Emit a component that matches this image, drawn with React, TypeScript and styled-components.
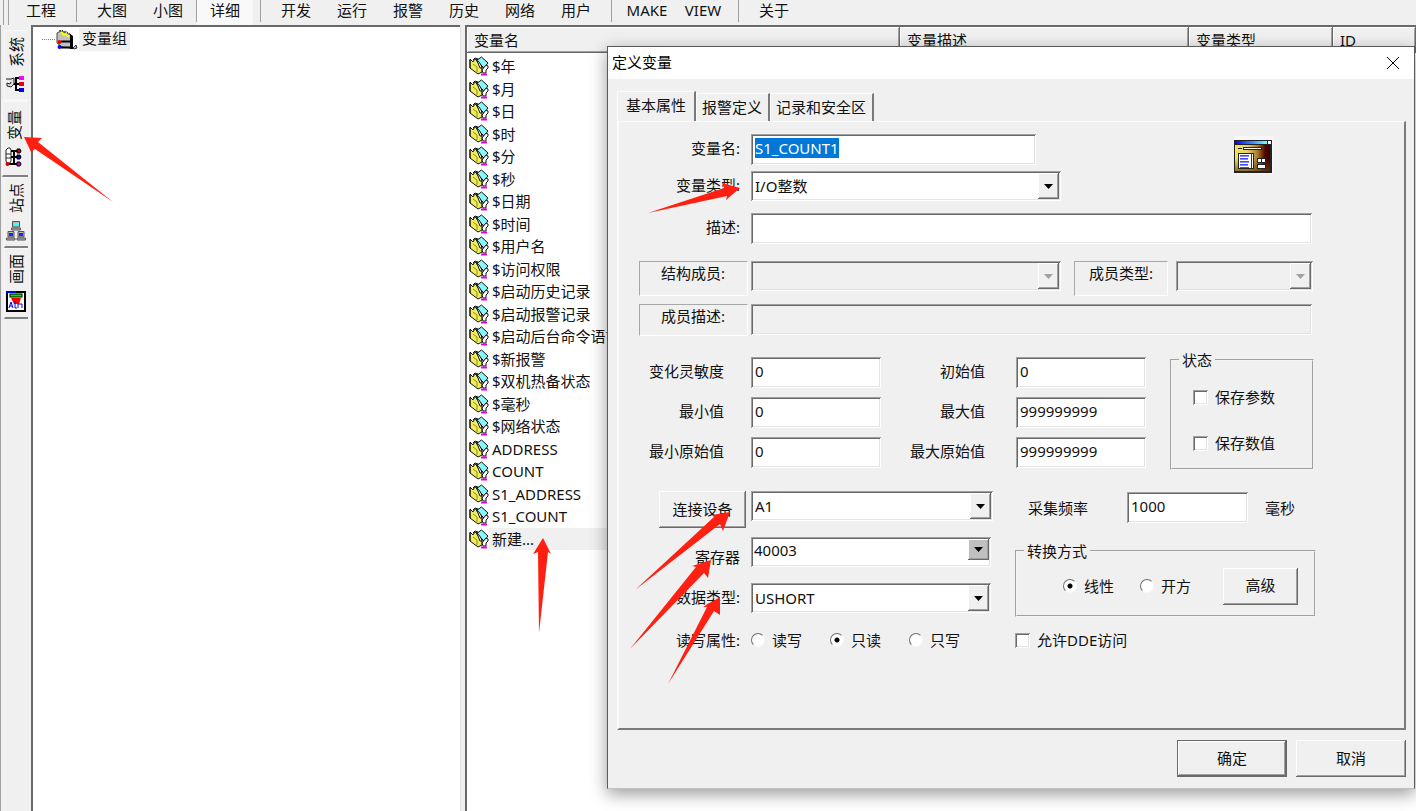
import React, { useEffect, useRef } from "react";
import styled, { createGlobalStyle, css } from "styled-components";

const SUNKEN = css`
  box-shadow: inset 1px 1px #a0a0a0, inset -1px -1px #ffffff, inset 2px 2px #696969,
    inset -2px -2px #e3e3e3;
`;
const RAISED = css`
  box-shadow: inset -1px -1px #696969, inset 1px 1px #ffffff, inset -2px -2px #a0a0a0;
`;

const GlobalStyle = createGlobalStyle`
  *, *::before, *::after { box-sizing: border-box; }
  body {
    margin: 0;
    background: #f0f0f0;
    color: #111;
    font: 15px/20px "Noto Sans", "Noto Sans CJK SC", sans-serif;
  }
  button, input, select { font: inherit; color: inherit; margin: 0; border-radius: 0; }
`;

const Screen = styled.div`
  position: relative;
  display: flex;
  flex-direction: column;
  min-height: 100vh;
  overflow: hidden;
`;

/* ---------- toolbar ---------- */
const Toolbar = styled.nav`
  display: flex;
  align-items: stretch;
  height: 25px;
  padding-left: 3px;
`;
const Grip = styled.span`
  width: 6px;
  margin-right: 4px;
  border-left: 1px solid #a0a0a0;
  border-right: 1px solid #a0a0a0;
`;
const ToolButton = styled.button<{ $pressed?: boolean }>`
  width: 56px;
  padding: 0 0 6px;
  border: 0;
  background: ${(p) => (p.$pressed ? "#f9f9f9" : "transparent")};
  white-space: nowrap;
`;
const Divider = styled.span<{ $tight?: boolean }>`
  width: 1px;
  margin: 0 ${(p) => (p.$tight ? 0 : 7)}px 3px;
  background: #a0a0a0;
`;

/* ---------- work area ---------- */
const Work = styled.div`
  display: flex;
  flex: 1;
`;
const SideTabs = styled.div`
  display: flex;
  flex-direction: column;
  width: 31px;
  padding: 5px 3px 0 1px;
  border-left: 1px solid #a0a0a0;
`;
const SideTab = styled.button<{ $active?: boolean }>`
  display: flex;
  flex-direction: column;
  align-items: center;
  justify-content: center;
  gap: 7px;
  width: ${(p) => (p.$active ? 26 : 24)}px;
  height: ${(p) => (p.$active ? 76 : 71)}px;
  align-self: flex-end;
  padding: 0 ${(p) => (p.$active ? 4 : 2)}px 0 0;
  border: solid #f8f8f8;
  border-width: 1px 0 2px 1px;
  border-bottom-color: #808080;
  background: #f0f0f0;
  &:first-child {
    border-bottom-color: #f8f8f8;
  }
`;
const SideLabel = styled.span`
  writing-mode: vertical-rl;
  text-orientation: sideways;
  transform: rotate(180deg);
  line-height: 18px;
`;
const Pane = styled.section<{ $grow?: boolean }>`
  flex: ${(p) => (p.$grow ? "1 1 0" : "0 0 429px")};
  min-width: 0;
  border: solid #696969;
  border-width: 2px 0 0 2px;
  background: #ffffff;
  overflow: hidden;
`;
const Splitter = styled.div`
  width: 5px;
  border-left: 1px solid #e3e3e3;
`;
const TreeItem = styled.div`
  display: flex;
  align-items: center;
  gap: 1px;
  padding: 1px 0 0 9px;
`;
const TreeLine = styled.span`
  width: 13px;
  border-top: 1px dotted #808080;
`;
const TreeLabel = styled.span`
  padding: 0 3px 3px;
  background: #f0f0f0;
`;

/* ---------- variable list ---------- */
const ListTable = styled.table`
  width: 100%;
  border-collapse: separate;
  border-spacing: 0;
  table-layout: fixed;
`;
const HeadCell = styled.th<{ $width?: number }>`
  width: ${(p) => (p.$width ? `${p.$width}px` : "auto")};
  height: 26px;
  padding: 0 7px 1px;
  font-weight: 400;
  text-align: left;
  background: #f0f0f0;
  ${RAISED}
`;
const Row = styled.tr`
  height: 22px;
  &:nth-child(even) {
    height: 23px;
  }
`;
const HeadGap = styled.tr`
  height: 2px;
`;
const Cell = styled.td`
  padding: 0;
  white-space: nowrap;
`;
const NameBox = styled.div<{ $selected?: boolean }>`
  display: flex;
  align-items: center;
  height: 22px;
  padding-left: 2px;
  span {
    flex: 1;
    padding: 1px 3px;
    background: ${(p) => (p.$selected ? "#f0f0f0" : "transparent")};
  }
`;

/* ---------- dialog ---------- */
const Dialog = styled.div`
  position: absolute;
  top: 46px;
  left: 607px;
  right: 1px;
  min-width: 808px;
  border: 1px solid #5a5a5a;
  border-bottom-color: #c0c0c0;
  background: #f0f0f0;
  box-shadow: 0 5px 16px rgba(0, 0, 0, 0.4);
`;
const TitleBar = styled.header`
  display: flex;
  align-items: center;
  justify-content: space-between;
  height: 32px;
  padding: 0 14px 0 4px;
  background: #ffffff;
  color: #000;
`;
const Title = styled.h1`
  margin: 0;
  padding-bottom: 2px;
  font-size: 15px;
  font-weight: 400;
`;
const CloseButton = styled.button`
  display: flex;
  padding: 0;
  border: 0;
  background: none;
`;
const DialogBody = styled.div`
  padding: 12px 8px 11px 9px;
`;
const TabStrip = styled.div`
  display: flex;
  align-items: flex-end;
  height: 30px;
`;
const Tab = styled.button<{ $active?: boolean }>`
  height: ${(p) => (p.$active ? 30 : 28)}px;
  padding: ${(p) => (p.$active ? "0 8px 3px" : "0 6px 1px 5px")};
  border: solid #fbfbfb;
  border-width: 1px 2px 0 1px;
  border-right-color: #7a7a7a;
  background: #f0f0f0;
  white-space: nowrap;
`;
const Panel = styled.form`
  display: flex;
  flex-direction: column;
  padding: 12px 20px 78px;
  border: solid #fbfbfb;
  border-width: 1px 2px 2px;
  border-right-color: #7a7a7a;
  border-bottom-color: #7a7a7a;
`;
const FieldRow = styled.div<{ $top?: number; $height?: number; $align?: string }>`
  display: flex;
  align-items: ${(p) => p.$align ?? "flex-start"};
  gap: 3px;
  width: max-content;
  height: ${(p) => p.$height ?? 29}px;
  margin-top: ${(p) => p.$top ?? 0}px;
`;
const Label = styled.label<{ $pad?: number; $end?: boolean }>`
  width: 109px;
  padding: ${(p) => (p.$end ? 0 : 4)}px ${(p) => p.$pad ?? 8}px 0 0;
  text-align: right;
  white-space: nowrap;
`;
const BoxLabel = styled.label<{ $width: number; $pad: number }>`
  align-self: stretch;
  width: ${(p) => p.$width}px;
  padding: 1px ${(p) => p.$pad}px 0 0;
  border: 1px solid #a8a8a8;
  border-right-color: #fff;
  border-bottom-color: #fff;
  text-align: right;
`;
const TextBox = styled.input<{ $width: number }>`
  width: ${(p) => p.$width}px;
  height: 31px;
  padding: 2px 4px 6px;
  border: 0;
  outline: 0;
  background: #ffffff;
  line-height: 21px;
  ${SUNKEN}
  &:disabled {
    background: #f0f0f0;
  }
  &::selection {
    background: #0078d7;
    color: #ffffff;
  }
`;
const ComboFrame = styled.div<{ $width: number }>`
  display: grid;
  width: ${(p) => p.$width}px;
  height: 30px;
  padding: 2px;
  background: #ffffff;
  ${SUNKEN}
  &:has(:disabled) {
    background: #f0f0f0;
  }
`;
const ComboSelect = styled.select`
  grid-area: 1 / 1;
  width: 100%;
  padding: 0 24px 0 2px;
  border: 0;
  outline: 0;
  appearance: none;
  background: transparent;
  opacity: 1;
`;
const ComboInput = styled.input`
  grid-area: 1 / 1;
  width: 100%;
  padding: 0 24px 4px 1px;
  border: 0;
  outline: 0;
  background: transparent;
`;
const ComboArrow = styled.span<{ $dark?: boolean }>`
  grid-area: 1 / 1;
  justify-self: end;
  display: flex;
  align-items: center;
  justify-content: center;
  width: 21px;
  height: ${(p) => (p.$dark ? "21px" : "100%")};
  background: ${(p) => (p.$dark ? "#c0c0c0" : "#f0f0f0")};
  pointer-events: none;
  ${RAISED}
`;
const PushButton = styled.button<{ $width: number; $default?: boolean }>`
  width: ${(p) => p.$width}px;
  height: 37px;
  padding: 0 0 2px;
  border: ${(p) => (p.$default ? "1px solid #696969" : "0")};
  background: #f0f0f0;
  ${RAISED}
`;
const AppIconSlot = styled.div`
  padding: 2px 0 0 195px;
`;
const MemberType = styled.div`
  display: flex;
  gap: 8px;
  height: 35px;
  padding-left: 10px;
`;
const Ranges = styled.div`
  display: flex;
  width: max-content;
  margin-top: 14px;
`;
const RangeGrid = styled.div`
  display: grid;
  grid-template-columns: 109px 133px 132px 133px;
  grid-auto-rows: 31px;
  row-gap: 9px;
  padding-top: 7px;
  ${Label} {
    width: auto;
  }
  ${TextBox} {
    margin-left: 3px;
  }
`;
const Group = styled.fieldset<{ $width: number; $height: number; $top?: number; $left?: number }>`
  width: ${(p) => p.$width}px;
  height: ${(p) => p.$height}px;
  min-width: 0;
  margin: ${(p) => p.$top ?? 0}px 0 0 ${(p) => p.$left ?? 0}px;
  padding: 0;
  border: 2px groove #f4f4f4;
`;
const Legend = styled.legend`
  margin-left: 7px;
  padding: 0 3px;
`;
const StateList = styled.div`
  display: flex;
  flex-direction: column;
  gap: 26px;
  padding: 17px 0 0 21px;
`;
const Choice = styled.label`
  display: flex;
  align-items: center;
  gap: 7px;
  white-space: nowrap;
`;
const Check = styled.input`
  appearance: none;
  width: 15px;
  height: 15px;
  background: #ffffff;
  ${SUNKEN}
`;
const Radio = styled.input`
  appearance: none;
  width: 14px;
  height: 14px;
  border: 1px solid;
  border-color: #707070 #f8f8f8 #f8f8f8 #707070;
  border-radius: 7px;
  background: #ffffff;
  &:checked {
    background: radial-gradient(circle, #000 0 2px, #fff 3px);
  }
`;
const Source = styled.div`
  display: flex;
  gap: 22px;
  width: max-content;
  margin-top: 21px;
`;
const SourceColumn = styled.div`
  display: flex;
  flex-direction: column;
`;
const DeviceButtonSlot = styled.div`
  width: 109px;
  padding-left: 20px;
`;
const RadioGroup = styled.div<{ $gap: number }>`
  display: flex;
  gap: ${(p) => p.$gap}px;
`;
const RateRow = styled.div`
  display: flex;
  align-items: center;
  height: 31px;
  margin-top: 1px;
  padding-left: 13px;
`;
const RateLabel = styled.label`
  width: 99px;
`;
const Unit = styled.span`
  padding-left: 17px;
`;
const ConvertRow = styled.div`
  display: flex;
  align-items: center;
  gap: 32px;
  height: 50px;
  padding: 0 0 0 46px;
`;
const Footer = styled.footer`
  display: flex;
  justify-content: flex-end;
  gap: 9px;
  padding-top: 10px;
`;
const Pointers = styled.svg`
  position: absolute;
  top: 0;
  left: 0;
  width: 100%;
  height: 100%;
  pointer-events: none;
`;

/* ---------- drawings ---------- */
const VarIcon = () => (
  <svg width="20" height="20" viewBox="0 0 20 20" aria-hidden="true">
    <path d="M1 3L4 6L5 4L7 3L9 6L13 11V16L9 18L1 12Z" fill="#f0ee58" stroke="#111" />
    <path d="M4 8L8 11L8 16" fill="none" stroke="#8a8a28" />
    <path d="M12.500 1L19 7L15 12L7.500 4.500Z" fill="#86f8fc" stroke="#111" />
    <path d="M7.500 4.500L10 6L12 9L13 12L11 12L9 7Z" fill="#fff" stroke="#111" />
    <path d="M15 11.500L17 9L19 10L19 12L17 14V17H14L13 14Z" fill="#fff" stroke="#111" />
    <path d="M1 4V12M4 4L6 2L9 3L8 5" fill="none" stroke="#111" />
    <path d="M12 17.500H18V19.500H12Z" fill="#e000e0" />
  </svg>
);
const GroupIcon = () => (
  <svg width="22" height="22" viewBox="0 0 22 22" aria-hidden="true">
    <path d="M1 4L5 2L15 6V19L6 18L1 14Z" fill="#c0c0c0" stroke="#444" />
    <path d="M3 2L6 1L8 3L10 2L12 4L14 5L16 7" fill="none" stroke="#333" strokeDasharray="2 1" />
    <path d="M5 3L8 6L10 5L13 8" fill="none" stroke="#ff0" strokeWidth="2" />
    <path d="M14 5L17 7V20H14Z" fill="#000" />
    <path d="M5 12.500H14M5 18.500H14" stroke="#000" strokeWidth="2" />
    <path d="M17 19L20 16L21 19L18 20Z" fill="#bbb" stroke="#333" />
    <circle cx="3.500" cy="13" r="2" fill="#e00" />
    <circle cx="3.500" cy="18" r="2" fill="#00e" />
  </svg>
);
const SystemIcon = () => (
  <svg width="20" height="18" viewBox="0 0 20 18" aria-hidden="true">
    <path d="M0 4H5L8 3V9L5 12L1 11V8L4 9L5 7" fill="#ddd" stroke="#222" />
    <path d="M8 9H14M14 3H10V15H14" fill="none" stroke="#000" strokeWidth="2" />
    <rect x="13" y="1" width="5" height="4" fill="#f0f" />
    <rect x="13" y="7" width="5" height="4" fill="#e00" />
    <rect x="13" y="13" width="5" height="4" fill="#00e" />
  </svg>
);
const VariableIcon = () => (
  <svg width="18" height="20" viewBox="0 0 18 20" aria-hidden="true">
    <path d="M1 3L3 1H5L6 3V14L5 16H2L1 14ZM1 7H6M1 11H6" fill="#fff" stroke="#222" />
    <path d="M6 4H14M6 10H14M3 17H14M9 4V17" fill="none" stroke="#000" strokeWidth="2" />
    <path d="M12 2H15L16 4L15 6H12Z" fill="#b00" stroke="#000" />
    <path d="M12 8H15L16 10L15 12H12Z" fill="#00c" stroke="#000" />
    <path d="M12 15H15L16 17L15 19H12Z" fill="#c0c" stroke="#000" />
    <circle cx="2.500" cy="17" r="2" fill="#d00" />
  </svg>
);
const StationIcon = () => (
  <svg width="20" height="21" viewBox="0 0 20 21" aria-hidden="true">
    <path d="M6.500 1.500H13.500V7H6.500ZM5.500 8H14.500V10H5.500ZM2 11.500H8V17H2ZM12 11.500H18V17H12ZM0.500 18H9V20H0.500ZM11 18H19.500V20H11Z" fill="#b8b8b8" stroke="#555" />
    <rect x="8" y="3" width="5" height="3" fill="#3ff" />
    <rect x="3" y="13" width="4" height="3" fill="#22e" />
    <rect x="13" y="13" width="4" height="3" fill="#22e" />
  </svg>
);
const PictureIcon = () => (
  <svg width="20" height="21" viewBox="0 0 20 21" aria-hidden="true">
    <rect x="1" y="1" width="18" height="19" fill="#fff" stroke="#000" strokeWidth="2" />
    <path d="M0 1H10" stroke="#00e" strokeWidth="2" />
    <rect x="4" y="3" width="12" height="3" fill="#0e0" stroke="#000" />
    <path d="M5 7H15L13 13H8Z" fill="#f00" />
    <path d="M3 17L5 11L7 17M4 15H6M9 10V17H11M12 17V13H16V17" fill="none" stroke="#00e" />
  </svg>
);
const WindowIcon = () => (
  <svg width="40" height="40" viewBox="0 0 40 40" shapeRendering="crispEdges" aria-hidden="true">
    <defs>
      <linearGradient id="gold" x1="0" y1="0" x2="1" y2="0">
        <stop offset="0" stopColor="#f2e455" />
        <stop offset="0.35" stopColor="#e8d070" />
        <stop offset="0.65" stopColor="#a87828" />
        <stop offset="0.85" stopColor="#500800" />
        <stop offset="1" stopColor="#400000" />
      </linearGradient>
      <linearGradient id="shade" x1="0" y1="0" x2="0" y2="1">
        <stop offset="0.5" stopColor="#604010" stopOpacity="0" />
        <stop offset="1" stopColor="#604010" stopOpacity="0.7" />
      </linearGradient>
      <linearGradient id="bar" x1="0" y1="0" x2="1" y2="0">
        <stop offset="0" stopColor="#0000ff" />
        <stop offset="1" stopColor="#70ffff" />
      </linearGradient>
    </defs>
    <rect width="40" height="38" fill="#f6f6f6" />
    <rect y="4" width="38" height="33" fill="#222" />
    <rect x="1" y="5" width="32" height="3" fill="url(#bar)" />
    <rect x="34" y="5" width="3" height="3" fill="#fff" />
    <rect x="1" y="9" width="35" height="26" fill="url(#gold)" />
    <rect x="1" y="9" width="35" height="26" fill="url(#shade)" />
    <path d="M4 12.500H8" stroke="#222" />
    <rect x="9.500" y="11.500" width="18" height="2" fill="#fff" stroke="#222" />
    <rect x="4.500" y="17.500" width="15" height="15" fill="#fff" stroke="#222" />
    <path d="M6 19.500H15M6 22.500H14M6 25.500H15M6 28.500H14M6 31H15" stroke="#4848ff" />
    <path d="M6 20.500H15M6 23.500H14M6 26.500H15M6 29.500H14" stroke="#8a8aff" />
    <path d="M17.500 17V33" stroke="#333" />
    <rect x="23.500" y="22.500" width="8" height="4" fill="#fff" stroke="#222" />
    <path d="M27.500 22V27" stroke="#222" />
    <rect x="23.500" y="28.500" width="8" height="4" fill="#fff" stroke="#222" />
  </svg>
);
const Triangle = ({ muted }: { muted?: boolean }) => (
  <svg width="9" height="5" viewBox="0 0 9 5" aria-hidden="true">
    <path d="M0 0H9L4.500 5Z" fill={muted ? "#a0a0a0" : "#000"} />
  </svg>
);

/* ---------- pieces ---------- */
const Combo = ({ id, width, value, disabled }: { id: string; width: number; value?: string; disabled?: boolean }) => (
  <ComboFrame $width={width}>
    <ComboSelect id={id} disabled={disabled}>
      {value && <option>{value}</option>}
    </ComboSelect>
    <ComboArrow>
      <Triangle muted={disabled} />
    </ComboArrow>
  </ComboFrame>
);

const VARIABLES = [
  "$年", "$月", "$日", "$时", "$分", "$秒", "$日期", "$时间", "$用户名", "$访问权限",
  "$启动历史记录", "$启动报警记录", "$启动后台命令语言", "$新报警", "$双机热备状态",
  "$毫秒", "$网络状态", "ADDRESS", "COUNT", "S1_ADDRESS", "S1_COUNT", "新建...",
];

const RANGES = [
  ["sens", "变化灵敏度", "0", "init", "初始值", "0"],
  ["min", "最小值", "0", "max", "最大值", "999999999"],
  ["rawMin", "最小原始值", "0", "rawMax", "最大原始值", "999999999"],
];

const POINTERS = [
  "24,137 42,138 38,142 113,202 35,149 31,152",
  "740,188 722,183 724,188 648,213 727,196 726,200",
  "730,512 712,515 714,517 635,590 720,524 723,531",
  "711,560 692,566 696,567 630,649 704,573 708,578",
  "720,597 703,607 707,607 668,684 714,611 720,615",
  "543,538 533,554 538,552 539,633 548,552 551,554",
];

export default function App() {
  const nameRef = useRef<HTMLInputElement>(null);
  useEffect(() => {
    nameRef.current?.focus();
    nameRef.current?.select();
  }, []);

  return (
    <Screen>
      <GlobalStyle />
      <Toolbar>
        <Grip />
        <ToolButton>工程</ToolButton>
        <Divider />
        <ToolButton>大图</ToolButton>
        <ToolButton>小图</ToolButton>
        <Divider $tight />
        <ToolButton $pressed>详细</ToolButton>
        <Divider />
        {["开发", "运行", "报警", "历史", "网络", "用户"].map((t) => (
          <ToolButton key={t}>{t}</ToolButton>
        ))}
        <Divider />
        <ToolButton>MAKE</ToolButton>
        <ToolButton>VIEW</ToolButton>
        <Divider />
        <ToolButton>关于</ToolButton>
      </Toolbar>

      <Work>
        <SideTabs>
          <SideTab><SideLabel>系统</SideLabel><SystemIcon /></SideTab>
          <SideTab $active><SideLabel>变量</SideLabel><VariableIcon /></SideTab>
          <SideTab><SideLabel>站点</SideLabel><StationIcon /></SideTab>
          <SideTab><SideLabel>画面</SideLabel><PictureIcon /></SideTab>
        </SideTabs>
        <Pane>
          <TreeItem>
            <TreeLine />
            <GroupIcon />
            <TreeLabel>变量组</TreeLabel>
          </TreeItem>
        </Pane>
        <Splitter />
        <Pane $grow>
          <ListTable>
            <thead>
              <tr>
                <HeadCell $width={433}>变量名</HeadCell>
                <HeadCell $width={289}>变量描述</HeadCell>
                <HeadCell $width={144}>变量类型</HeadCell>
                <HeadCell>ID</HeadCell>
              </tr>
              <HeadGap />
            </thead>
            <tbody>
              {VARIABLES.map((name) => (
                <Row key={name}>
                  <Cell>
                    <NameBox $selected={name === "新建..."}>
                      <VarIcon />
                      <span>{name}</span>
                    </NameBox>
                  </Cell>
                  <Cell />
                  <Cell />
                  <Cell />
                </Row>
              ))}
            </tbody>
          </ListTable>
        </Pane>
      </Work>

      <Dialog role="dialog" aria-labelledby="dialog-title">
        <TitleBar>
          <Title id="dialog-title">定义变量</Title>
          <CloseButton aria-label="关闭">
            <svg width="14" height="14" viewBox="0 0 14 14" aria-hidden="true">
              <path d="M1 1L13 13M13 1L1 13" stroke="#000" />
            </svg>
          </CloseButton>
        </TitleBar>
        <DialogBody>
          <TabStrip>
            <Tab $active>基本属性</Tab>
            <Tab>报警定义</Tab>
            <Tab>记录和安全区</Tab>
          </TabStrip>
          <Panel onSubmit={(e) => e.preventDefault()}>
            <FieldRow $height={31}>
              <Label htmlFor="name">变量名:</Label>
              <TextBox id="name" ref={nameRef} $width={285} defaultValue="S1_COUNT1" />
              <AppIconSlot><WindowIcon /></AppIconSlot>
            </FieldRow>
            <FieldRow $top={6}>
              <Label htmlFor="type">变量类型:</Label>
              <Combo id="type" width={310} value="I/O整数" />
            </FieldRow>
            <FieldRow $top={13} $height={31}>
              <Label htmlFor="desc">描述:</Label>
              <TextBox id="desc" $width={561} />
            </FieldRow>
            <FieldRow $top={17} $height={35}>
              <BoxLabel htmlFor="member" $width={109} $pad={22}>结构成员:</BoxLabel>
              <Combo id="member" width={310} disabled />
              <MemberType>
                <BoxLabel htmlFor="memberType" $width={94} $pad={14}>成员类型:</BoxLabel>
                <Combo id="memberType" width={137} disabled />
              </MemberType>
            </FieldRow>
            <FieldRow $top={8} $height={32}>
              <BoxLabel htmlFor="memberDesc" $width={109} $pad={22}>成员描述:</BoxLabel>
              <TextBox id="memberDesc" $width={561} disabled />
            </FieldRow>

            <Ranges>
              <RangeGrid>
                {RANGES.map(([idA, labelA, valueA, idB, labelB, valueB]) => (
                  <React.Fragment key={idA}>
                    <Label htmlFor={idA} $pad={24}>{labelA}</Label>
                    <TextBox id={idA} $width={130} defaultValue={valueA} />
                    <Label htmlFor={idB} $pad={28}>{labelB}</Label>
                    <TextBox id={idB} $width={130} defaultValue={valueB} />
                  </React.Fragment>
                ))}
              </RangeGrid>
              <Group $width={144} $height={120} $left={24}>
                <Legend>状态</Legend>
                <StateList>
                  <Choice><Check type="checkbox" />保存参数</Choice>
                  <Choice><Check type="checkbox" />保存数值</Choice>
                </StateList>
              </Group>
            </Ranges>

            <Source>
              <SourceColumn>
                <FieldRow $height={37}>
                  <DeviceButtonSlot>
                    <PushButton type="button" $width={87}>连接设备</PushButton>
                  </DeviceButtonSlot>
                  <Combo id="device" width={242} value="A1" />
                </FieldRow>
                <FieldRow $top={10} $align="flex-end">
                  <Label htmlFor="register" $end>寄存器</Label>
                  <ComboFrame $width={240}>
                    <ComboInput id="register" defaultValue="40003" />
                    <ComboArrow $dark><Triangle /></ComboArrow>
                  </ComboFrame>
                </FieldRow>
                <FieldRow $top={16}>
                  <Label htmlFor="dataType">数据类型:</Label>
                  <Combo id="dataType" width={240} value="USHORT" />
                </FieldRow>
                <FieldRow $top={18} $height={20}>
                  <Label as="span" $end>读写属性:</Label>
                  <RadioGroup $gap={28}>
                    <Choice><Radio type="radio" name="access" />读写</Choice>
                    <Choice><Radio type="radio" name="access" defaultChecked />只读</Choice>
                    <Choice><Radio type="radio" name="access" />只写</Choice>
                  </RadioGroup>
                </FieldRow>
              </SourceColumn>
              <SourceColumn>
                <RateRow>
                  <RateLabel htmlFor="rate">采集频率</RateLabel>
                  <TextBox id="rate" $width={121} defaultValue="1000" />
                  <Unit>毫秒</Unit>
                </RateRow>
                <Group $width={301} $height={76} $top={18}>
                  <Legend>转换方式</Legend>
                  <ConvertRow>
                    <RadioGroup $gap={26}>
                      <Choice><Radio type="radio" name="convert" defaultChecked />线性</Choice>
                      <Choice><Radio type="radio" name="convert" />开方</Choice>
                    </RadioGroup>
                    <PushButton type="button" $width={75}>高级</PushButton>
                  </ConvertRow>
                </Group>
                <FieldRow $top={13} $height={20}>
                  <Choice><Check type="checkbox" />允许DDE访问</Choice>
                </FieldRow>
              </SourceColumn>
            </Source>
          </Panel>
          <Footer>
            <PushButton $width={110} $default>确定</PushButton>
            <PushButton $width={110}>取消</PushButton>
          </Footer>
        </DialogBody>
      </Dialog>

      <Pointers aria-hidden="true">
        {POINTERS.map((points) => (
          <polygon key={points} points={points} fill="#ff2012" />
        ))}
      </Pointers>
    </Screen>
  );
}
